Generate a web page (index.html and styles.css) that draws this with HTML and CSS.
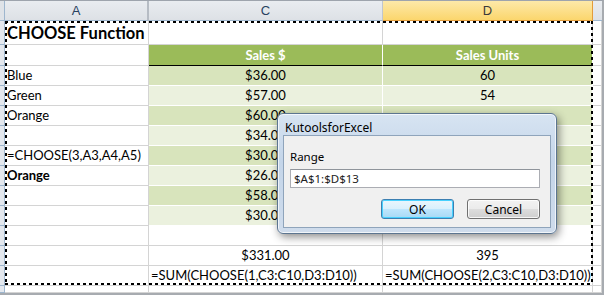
FILE: index.html
```html
<!DOCTYPE html>
<html>
<head>
<meta charset="utf-8">
<link rel="stylesheet" href="styles.css">
</head>
<body>
<div class="sheet">
  <div class="grid">
    <div class="rh top"></div><div class="hdr hdr-a">A</div><div class="hdr">C</div><div class="hdr sel">D</div><div class="hdr hdr-e"></div>

    <div class="rh"></div><div class="c title">CHOOSE Function</div><div class="c"></div><div class="c"></div><div class="c"></div>

    <div class="rh"></div><div class="c"></div><div class="c g">Sales $</div><div class="c g">Sales Units</div><div class="c"></div>

    <div class="rh"></div><div class="c">Blue</div><div class="c t1">$36.00</div><div class="c t1">60</div><div class="c"></div>
    <div class="rh"></div><div class="c">Green</div><div class="c t2">$57.00</div><div class="c t2">54</div><div class="c"></div>
    <div class="rh"></div><div class="c">Orange</div><div class="c t1">$60.00</div><div class="c t1"></div><div class="c"></div>
    <div class="rh"></div><div class="c"></div><div class="c t2">$34.00</div><div class="c t2"></div><div class="c"></div>
    <div class="rh"></div><div class="c">=CHOOSE(3,A3,A4,A5)</div><div class="c t1">$30.00</div><div class="c t1"></div><div class="c"></div>
    <div class="rh"></div><div class="c b">Orange</div><div class="c t2">$26.00</div><div class="c t2"></div><div class="c"></div>
    <div class="rh"></div><div class="c"></div><div class="c t1">$58.00</div><div class="c t1"></div><div class="c"></div>
    <div class="rh"></div><div class="c"></div><div class="c t2">$30.00</div><div class="c t2"></div><div class="c"></div>
    <div class="rh"></div><div class="c"></div><div class="c"></div><div class="c"></div><div class="c"></div>
    <div class="rh"></div><div class="c"></div><div class="c ctr">$331.00</div><div class="c ctr">395</div><div class="c"></div>
    <div class="rh"></div><div class="c"></div><div class="c">=SUM(CHOOSE(1,C3:C10,D3:D10))</div><div class="c">=SUM(CHOOSE(2,C3:C10,D3:D10))</div><div class="c"></div>
    <div class="rh"></div><div class="c"></div><div class="c"></div><div class="c"></div><div class="c"></div>
  </div>

  <div class="marquee"></div>

  <div class="dialog">
    <div class="dlg-title">KutoolsforExcel</div>
    <div class="dlg-body">
      <div class="dlg-label">Range</div>
      <div class="dlg-input">$A$1:$D$13</div>
      <div class="dlg-buttons">
        <div class="btn btn-default">OK</div>
        <div class="btn">Cancel</div>
      </div>
    </div>
  </div>
</div>
</body>
</html>
```
FILE: styles.css
```css
* { box-sizing: border-box; }
html, body { margin: 0; padding: 0; background: #fff; }

.sheet {
  position: relative;
  width: 604px;
  height: 295px;
  overflow: hidden;
  border-top: 1px solid #9ea4ad;
  border-right: 2px solid #a7abb0;
  border-bottom: 2px solid #a7abb0;
  font-family: Lato, "Liberation Sans", sans-serif;
  font-size: 13px;
  color: #000;
}

.grid {
  display: grid;
  grid-template-columns: 5px 144px 234px 210px 9px;
  grid-template-rows: 20px 24px 21px repeat(11, 20px) 1fr;
  height: 100%;
}

.rh {
  background: #e4e8ee;
  border-right: 1px solid #9eb6ce;
  border-bottom: 1px solid #9eb6ce;
}
.rh.top { background: #dfe3e8; }

.hdr {
  background: linear-gradient(#e9ecf0, #dde1e6);
  border-right: 1px solid #c0c6ce;
  border-bottom: 1px solid #9eb6ce;
  color: #27415f;
  font-family: "Liberation Sans", sans-serif;
  font-size: 13px;
  display: flex;
  align-items: center;
  justify-content: center;
}
.hdr-a { border-right: 2px solid #b6bcc4; }
.hdr.sel {
  background: linear-gradient(#fde9a9, #fbd66d);
  border-right: 1px solid #e39c3b;
  border-bottom: 1px solid #e39c3b;
  color: #3a3a3a;
}
.hdr-e { border-right: none; }

.c {
  border-right: 1px solid #d4d4d4;
  border-bottom: 1px solid #d4d4d4;
  display: flex;
  align-items: flex-end;
  padding: 0 0 1px 2px;
  white-space: nowrap;
  overflow: visible;
  line-height: 17px;
}
.title {
  font-weight: bold;
  font-size: 16.5px;
  line-height: 22px;
  padding-bottom: 0;
}
.b { font-weight: bold; }
.ctr { justify-content: center; padding-left: 0; }

.g {
  background: #9bbb59;
  color: #fff;
  font-weight: bold;
  justify-content: center;
  padding-left: 0;
  border-right: 1px solid #fff;
  border-bottom: 1px solid #000;
}
.t1, .t2 {
  justify-content: center;
  padding-left: 0;
  border-right: 1px solid #fff;
  border-bottom: 1px solid #fff;
}
.t1 { background: #d8e4bc; }
.t2 { background: #ebf1de; }

.marquee {
  position: absolute;
  left: 5px;
  top: 20px;
  width: 588px;
  height: 264px;
  pointer-events: none;
  background:
    repeating-linear-gradient(90deg, #000 0 3px, transparent 3px 6px) top / 100% 2px no-repeat,
    repeating-linear-gradient(90deg, #000 0 3px, transparent 3px 6px) bottom / 100% 2px no-repeat,
    repeating-linear-gradient(180deg, #000 0 3px, transparent 3px 6px) left / 2px 100% no-repeat,
    repeating-linear-gradient(180deg, #000 0 3px, transparent 3px 6px) right / 2px 100% no-repeat;
}

.dialog {
  position: absolute;
  left: 277px;
  top: 112px;
  width: 280px;
  height: 121px;
  border: 1px solid #5c7590;
  border-radius: 6px;
  background: linear-gradient(#d7e4f2, #c4d5e9 40%, #cfdcec);
  box-shadow: 2px 3px 9px rgba(0, 0, 0, 0.45), inset 0 0 0 1px rgba(255, 255, 255, 0.7);
  padding: 0 5px 5px 5px;
  display: flex;
  flex-direction: column;
  font-family: "Noto Sans", "DejaVu Sans", sans-serif;
  font-size: 11.5px;
  color: #000;
}
.dlg-title {
  height: 21px;
  line-height: 19px;
  padding: 4px 0 0 2px;
  font-size: 12px;
}
.dlg-body {
  flex: 1;
  background: #f0f0f0;
  border: 1px solid #8fa4bb;
  padding: 14px 10px 0 6px;
  display: flex;
  flex-direction: column;
}
.dlg-label { line-height: 14px; height: 16px; }
.dlg-input {
  margin-top: 3px;
  height: 19px;
  background: #fff;
  border: 1px solid #abadb3;
  border-top-color: #8f949b;
  padding-left: 3px;
  line-height: 17px;
  color: #222;
}
.dlg-buttons {
  margin-top: 11px;
  display: flex;
  justify-content: flex-end;
  gap: 13px;
}
.btn {
  width: 73px;
  height: 20px;
  border: 1px solid #707070;
  border-radius: 3px;
  background: linear-gradient(#f2f2f2 0, #ebebeb 50%, #dddddd 51%, #cfcfcf 100%);
  box-shadow: inset 0 0 0 1px rgba(255, 255, 255, 0.8);
  display: flex;
  align-items: center;
  justify-content: center;
  font-size: 12px;
}
.btn-default {
  border-color: #3c7fb1;
  background: linear-gradient(#eaf6fd 0, #d9f0fc 50%, #bee6fd 51%, #a7d9f5 100%);
  box-shadow: inset 0 0 0 1px #48d1fe;
}
```
